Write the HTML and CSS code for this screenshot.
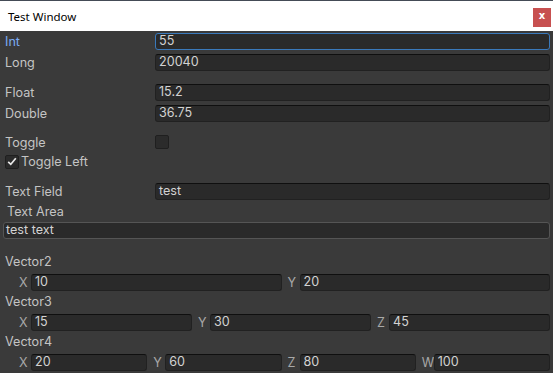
FILE: index.html
```html
<!DOCTYPE html>
<html>
<head>
<meta charset="utf-8">
<link rel="stylesheet" href="styles.css">
</head>
<body>
<div class="window">
  <div class="titlebar">
    <span class="title">Test Window</span>
    <div class="close">x</div>
  </div>
  <div class="content">
    <div class="row r21"><span class="label focus">Int</span><div class="field focused">55</div></div>
    <div class="row r21"><span class="label">Long</span><div class="field">20040</div></div>
    <div class="sp9"></div>
    <div class="row r21"><span class="label">Float</span><div class="field">15.2</div></div>
    <div class="row r21"><span class="label">Double</span><div class="field">36.75</div></div>
    <div class="sp8"></div>
    <div class="row r20"><span class="label">Toggle</span><div class="check"></div></div>
    <div class="row r19 tl"><div class="check on"><svg width="10" height="9" viewBox="0 0 10 9"><path d="M1.2 4.8 L3.8 7.3 L8.8 1.3" fill="none" stroke="#e8e8e8" stroke-width="1.7"/></svg></div><span class="tllabel">Toggle Left</span></div>
    <div class="sp10"></div>
    <div class="row r21"><span class="label">Text Field</span><div class="field">test</div></div>
    <div class="row r18"><span class="label ta">Text Area</span></div>
    <div class="row r21"><div class="field area">test text</div></div>
    <div class="sp10"></div>
    <div class="row r20"><span class="label">Vector2</span></div>
    <div class="vrow">
      <div class="comp"><span class="axis">X</span><div class="field">10</div></div>
      <div class="comp"><span class="axis">Y</span><div class="field">20</div></div>
    </div>
    <div class="row r20"><span class="label">Vector3</span></div>
    <div class="vrow">
      <div class="comp"><span class="axis">X</span><div class="field">15</div></div>
      <div class="comp"><span class="axis">Y</span><div class="field">30</div></div>
      <div class="comp"><span class="axis">Z</span><div class="field">45</div></div>
    </div>
    <div class="row r20"><span class="label">Vector4</span></div>
    <div class="vrow">
      <div class="comp"><span class="axis">X</span><div class="field">20</div></div>
      <div class="comp"><span class="axis">Y</span><div class="field">60</div></div>
      <div class="comp"><span class="axis">Z</span><div class="field">80</div></div>
      <div class="comp"><span class="axis">W</span><div class="field">100</div></div>
    </div>
  </div>
</div>
</body>
</html>
```
FILE: styles.css
```css
html, body {
  margin: 0;
  padding: 0;
  width: 553px;
  height: 373px;
  overflow: hidden;
  background: #3a3a3a;
}
.window {
  width: 553px;
  height: 373px;
  display: flex;
  flex-direction: column;
  font-family: Inter, "Noto Sans", sans-serif;
  font-size: 12.6px;
  color: #c4c4c4;
}
.titlebar {
  height: 30px;
  background: #ffffff;
  border-top: 1px solid #444b56;
  display: flex;
  align-items: center;
  justify-content: space-between;
  flex: none;
}
.title {
  font-family: "Noto Sans", "Open Sans", sans-serif;
  font-size: 11.5px;
  color: #000;
  padding-left: 8px;
  margin-top: 1px;
}
.close {
  width: 18px;
  height: 19px;
  margin-right: 2px;
  margin-top: 2px;
  background: #c75050;
  color: #fff;
  font-family: "DejaVu Sans", sans-serif;
  font-weight: bold;
  font-size: 10px;
  display: flex;
  align-items: center;
  justify-content: center;
  line-height: 1;
  padding-bottom: 2px;
  box-sizing: border-box;
}
.content {
  flex: 1;
  display: flex;
  flex-direction: column;
  padding: 0 3px 0 5px;
}
.row {
  display: flex;
  align-items: center;
  flex: none;
}
.r21 { height: 21px; }
.r20 { height: 20px; }
.r19 { height: 19px; }
.r18 { height: 18px; }
.sp8 { height: 8px; flex: none; }
.sp9 { height: 9px; flex: none; }
.sp10 { height: 10px; flex: none; }
.label {
  width: 150px;
  flex: none;
  color: #c4c4c4;
}
.label.focus { color: #7babf4; }
.label.ta { padding-left: 2px; }
.field {
  flex: 1;
  height: 17px;
  box-sizing: border-box;
  background: #2a2a2a;
  border: 1px solid #212121;
  border-top-color: #0f0f0f;
  border-radius: 3px;
  color: #d2d2d2;
  padding-left: 3px;
  display: flex;
  align-items: center;
  line-height: 1;
  white-space: nowrap;
  overflow: hidden;
}
.field.focused {
  border-color: #3a79bb;
}
.field.area {
  margin-left: -2px;
  border-color: #555555;
  border-top-color: #555555;
  padding-left: 2px;
}
.check {
  width: 14px;
  height: 14px;
  box-sizing: border-box;
  background: #2b2b2b;
  border: 1px solid #1f1f1f;
  border-radius: 2px;
  display: flex;
  align-items: center;
  justify-content: center;
}
.tl .check { margin-right: 2px; }
.tllabel { color: #c4c4c4; }
.vrow {
  height: 20px;
  flex: none;
  display: flex;
  align-items: center;
  gap: 4px;
  padding-left: 12px;
  margin-top: 1px;
  margin-bottom: -1px;
}
.comp {
  flex: 1;
  display: flex;
  align-items: center;
  min-width: 0;
}
.axis {
  width: 14px;
  flex: none;
  padding-left: 2px;
  box-sizing: border-box;
  color: #a8a8a8;
}
```
